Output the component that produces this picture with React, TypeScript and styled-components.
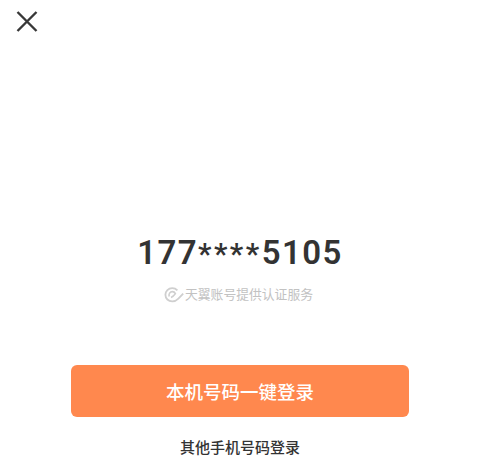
import React from 'react';
import styled, { createGlobalStyle } from 'styled-components';

const GlobalStyle = createGlobalStyle`
    html, body {
        margin: 0;
        padding: 0;
        background: #fff;
    }
`;

const App: React.FC = () => {
    return (
        <Page>
            <GlobalStyle />
            <CloseButton aria-label="关闭">
                <svg width="24" height="24" viewBox="0 0 24 24" fill="none">
                    <path d="M2.5 2L21.5 21M21.5 2L2.5 21" stroke="#383838" strokeWidth="2.4" />
                </svg>
            </CloseButton>
            <Phone>
                177<Mask>****</Mask>5105
            </Phone>
            <Provider>
                <svg width="20" height="16" viewBox="0 0 20 16" fill="none">
                    <path
                        d="M13.4 3.4C12 1.9 10.2 1.2 8.2 1.2C4.4 1.2 1.4 4.1 1.4 7.8C1.4 11.5 4.4 14.4 8.2 14.4C10.6 14.4 12.6 13.4 14.4 11.6L19.2 6.6"
                        stroke="#cfcfcf"
                        strokeWidth="1.8"
                    />
                    <path
                        d="M5.2 9.4C4.4 7 6 4.6 8.4 4.6C9.8 4.6 10.8 5.4 11.4 6.6C10.2 8.4 8.6 9.8 7 10.4"
                        stroke="#cfcfcf"
                        strokeWidth="1.6"
                    />
                </svg>
                <span>天翼账号提供认证服务</span>
            </Provider>
            <LoginButton>本机号码一键登录</LoginButton>
            <OtherLogin>其他手机号码登录</OtherLogin>
        </Page>
    );
};

const Page = styled.div`
    width: 480px;
    height: 472px;
    box-sizing: border-box;
    padding-top: 10px;
    overflow: hidden;
    display: flex;
    flex-direction: column;
    align-items: center;
    background: #fff;
    font-family: 'Liberation Sans', 'Noto Sans CJK SC', sans-serif;
`;

const CloseButton = styled.button`
    align-self: flex-start;
    flex-shrink: 0;
    width: 24px;
    height: 24px;
    margin-left: 15px;
    padding: 0;
    border: 0;
    background: none;

    svg {
        display: block;
    }
`;

const Phone = styled.div`
    margin-top: 199px;
    font-family: Roboto, 'Noto Sans', sans-serif;
    font-weight: 600;
    font-size: 33px;
    line-height: 40px;
    letter-spacing: 1.4px;
    color: #333;
`;

const Mask = styled.span`
    font-size: 30px;
    line-height: 1;
    letter-spacing: 2.5px;
`;

const Provider = styled.div`
    display: flex;
    align-items: center;
    gap: 1px;
    margin-top: 13px;
    margin-left: -3px;
    font-size: 12.8px;
    line-height: 18px;
    color: #c2c2c2;
`;

const LoginButton = styled.button`
    flex-shrink: 0;
    width: 338px;
    height: 52px;
    margin-top: 61px;
    padding: 0;
    border: 0;
    border-radius: 6px;
    background: #ff884e;
    color: #fff;
    font-family: inherit;
    font-weight: 500;
    font-size: 18.5px;
`;

const OtherLogin = styled.div`
    margin-top: 21px;
    font-size: 15px;
    line-height: 20px;
    font-weight: 500;
    color: #333;
`;

export default App;
